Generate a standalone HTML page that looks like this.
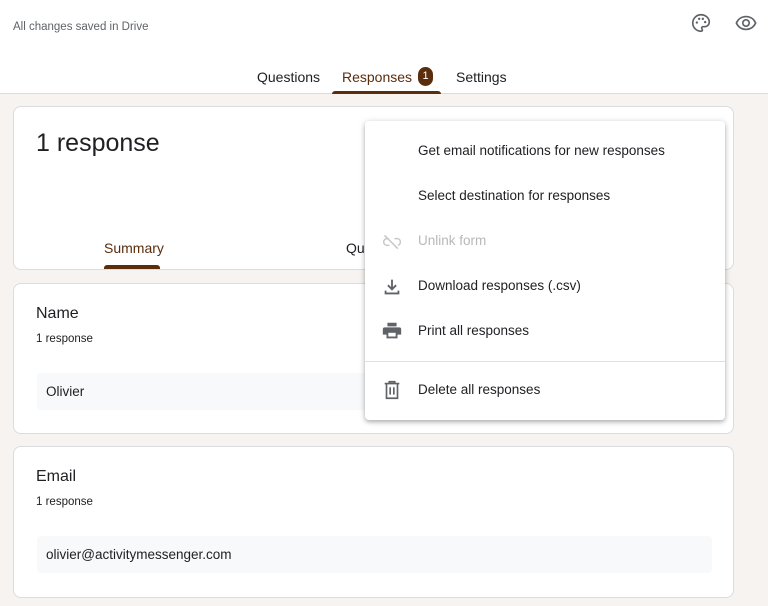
<!DOCTYPE html>
<html><head><meta charset="utf-8"><style>
*{margin:0;padding:0;box-sizing:border-box}
body{width:768px;height:606px;overflow:hidden;background:#f6f3f0;font-family:"Liberation Sans",sans-serif;color:#202124;position:relative}
.hdr{position:absolute;left:0;top:0;width:768px;height:94px;background:#fff;border-bottom:1px solid #dcdcdc}
.abs{position:absolute}
.card{position:absolute;left:13px;width:721px;background:#fff;border:1px solid #dadce0;border-radius:8px}
.ans{position:absolute;left:23px;width:675px;height:37px;background:#f8f9fa;border-radius:4px;font-size:13.5px;line-height:37px;padding-left:9px}
.menu{position:absolute;left:365px;top:121px;width:360px;height:299px;background:#fff;border-radius:4px;box-shadow:0 2px 4px rgba(0,0,0,.25),0 1px 8px rgba(0,0,0,.12)}
.mi{position:absolute;left:53px;font-size:13.5px;color:#202124}
.ic{position:absolute;left:16px}
</style></head><body>
<div class="hdr">
<div class="abs" style="left:13px;top:21px;font-size:11.5px;color:#5f6368">All changes saved in Drive</div>
<svg class="abs" style="left:690px;top:12px" width="22" height="22" viewBox="0 0 24 24"><path d="M12 3a9 9 0 0 0 0 18c1 0 1.5-.7 1.5-1.5 0-.4-.2-.7-.4-1-.2-.3-.4-.6-.4-1 0-.8.7-1.5 1.5-1.5H16a5 5 0 0 0 5-5c0-4.4-4-8-9-8z" fill="none" stroke="#5f6368" stroke-width="1.8"/><circle cx="7.5" cy="11.5" r="1.3" fill="#5f6368"/><circle cx="10" cy="7.5" r="1.3" fill="#5f6368"/><circle cx="14" cy="7.5" r="1.3" fill="#5f6368"/><circle cx="16.5" cy="11" r="1.3" fill="#5f6368"/></svg>
<svg class="abs" style="left:734px;top:12px" width="24" height="22" viewBox="0 0 24 24"><path d="M1.5 12C3.5 7.5 7.5 5 12 5s8.5 2.5 10.5 7c-2 4.5-6 7-10.5 7S3.5 16.5 1.5 12z" fill="none" stroke="#5f6368" stroke-width="1.8"/><circle cx="12" cy="12" r="3.5" fill="none" stroke="#5f6368" stroke-width="1.8"/></svg>
<div class="abs" style="left:257px;top:69px;font-size:14px;color:#202124">Questions</div>
<div class="abs" style="left:342px;top:69px;font-size:14px;color:#5a2d0c">Responses</div>
<div class="abs" style="left:418px;top:67px;width:15px;height:19px;border-radius:8px;background:#5a2d0c;color:#fff;font-size:11px;text-align:center;line-height:19px">1</div>
<div class="abs" style="left:456px;top:69px;font-size:14px;color:#202124">Settings</div>
<div class="abs" style="left:332px;top:91px;width:109px;height:3px;background:#5a2d0c;border-radius:3px 3px 0 0"></div>
</div>
<div class="card" style="top:106px;height:164px">
<div class="abs" style="left:22px;top:22px;font-size:25px;color:#202124">1 response</div>
<div class="abs" style="left:90px;top:133px;font-size:14px;color:#5a2d0c">Summary</div>
<div class="abs" style="left:90px;top:158px;width:56px;height:4px;background:#5a2d0c;border-radius:3px 3px 0 0"></div>
<div class="abs" style="left:332px;top:133px;font-size:14px">Qu</div>
</div>
<div class="card" style="top:283px;height:151px">
<div class="abs" style="left:22px;top:21px;font-size:16px">Name</div>
<div class="abs" style="left:22px;top:49px;font-size:11.5px">1 response</div>
<div class="ans" style="top:89px">Olivier</div>
</div>
<div class="card" style="top:446px;height:152px">
<div class="abs" style="left:22px;top:21px;font-size:16px">Email</div>
<div class="abs" style="left:22px;top:49px;font-size:11.5px">1 response</div>
<div class="ans" style="top:89px">olivier@activitymessenger.com</div>
</div>
<div class="menu">
<div class="mi" style="top:22px">Get email notifications for new responses</div>
<div class="mi" style="top:67px">Select destination for responses</div>
<svg class="ic" style="top:111px" width="22" height="20" viewBox="0 0 24 24"><path d="M8 8H6a4 4 0 0 0 0 8h3M15 8h3a4 4 0 0 1 1 7.9M3 4l16 16" fill="none" stroke="#c8c8c8" stroke-width="1.8"/></svg>
<div class="mi" style="top:112px;color:#b8b8b8">Unlink form</div>
<svg class="ic" style="top:155px" width="22" height="22" viewBox="0 0 24 24"><path d="M12 4v10M7.5 10l4.5 4.5 4.5-4.5M5 16v3h14v-3" fill="none" stroke="#5f6368" stroke-width="2"/></svg>
<div class="mi" style="top:157px">Download responses (.csv)</div>
<svg class="ic" style="top:199px" width="22" height="22" viewBox="0 0 24 24"><path d="M7 3h10v4H7zM4 8h16a2 2 0 0 1 2 2v6h-4v4H6v-4H2v-6a2 2 0 0 1 2-2z" fill="#5f6368"/><rect x="8" y="14" width="8" height="4" fill="#fff"/></svg>
<div class="mi" style="top:202px">Print all responses</div>
<div class="abs" style="left:0;top:240px;width:360px;height:1px;background:#e0e0e0"></div>
<svg class="ic" style="top:258px" width="22" height="22" viewBox="0 0 24 24"><path d="M4 5h16M9 5V3h6v2M6 5v16h12V5M10 9v8M14 9v8" fill="none" stroke="#5f6368" stroke-width="1.8"/></svg>
<div class="mi" style="top:261px">Delete all responses</div>
</div>
</body></html>
